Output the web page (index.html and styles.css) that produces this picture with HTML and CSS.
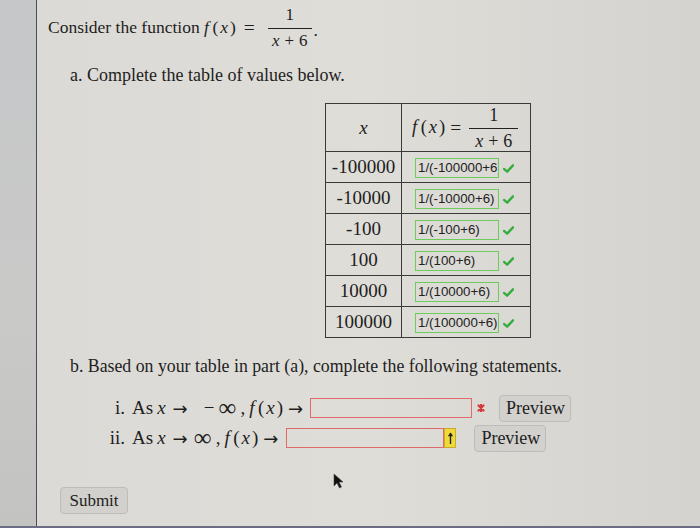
FILE: index.html
```html
<!DOCTYPE html>
<html>
<head>
<meta charset="utf-8">
<link rel="stylesheet" href="styles.css">
</head>
<body>
<div class="page">
  <div class="sidebar"></div>
  <div class="main">
    <div class="intro">
      <span class="t">Consider the function </span>
      <span class="fx"><i class="f">f</i>(<i class="x">x</i>)</span><span class="eq">=</span>
      <span class="frac"><span class="num">1</span><span class="den"><i>x</i><span class="plus">+</span>6</span></span><span class="dot">.</span>
    </div>
    <p class="parta">a. Complete the table of values below.</p>
    <div class="tablewrap">
      <table class="values">
        <tr class="head">
          <th class="c1"><i>x</i></th>
          <th class="c2"><div class="hf"><span class="fx"><i class="f">f</i>(<i class="x">x</i>)</span><span class="eq">=</span><span class="frac"><span class="num">1</span><span class="den"><i>x</i><span class="plus">+</span>6</span></span></div></th>
        </tr>
        <tr><td class="c1">-100000</td><td class="c2"><span class="ans">1/(-100000+6)</span><svg class="ok" viewBox="0 0 12 10" width="11" height="9"><path d="M1 5.5 L4.5 8.5 L11 1.5" fill="none" stroke="#35ad3c" stroke-width="2.6" stroke-linecap="round" stroke-linejoin="round"/></svg></td></tr>
        <tr><td class="c1">-10000</td><td class="c2"><span class="ans">1/(-10000+6)</span><svg class="ok" viewBox="0 0 12 10" width="11" height="9"><path d="M1 5.5 L4.5 8.5 L11 1.5" fill="none" stroke="#35ad3c" stroke-width="2.6" stroke-linecap="round" stroke-linejoin="round"/></svg></td></tr>
        <tr><td class="c1">-100</td><td class="c2"><span class="ans">1/(-100+6)</span><svg class="ok" viewBox="0 0 12 10" width="11" height="9"><path d="M1 5.5 L4.5 8.5 L11 1.5" fill="none" stroke="#35ad3c" stroke-width="2.6" stroke-linecap="round" stroke-linejoin="round"/></svg></td></tr>
        <tr><td class="c1">100</td><td class="c2"><span class="ans">1/(100+6)</span><svg class="ok" viewBox="0 0 12 10" width="11" height="9"><path d="M1 5.5 L4.5 8.5 L11 1.5" fill="none" stroke="#35ad3c" stroke-width="2.6" stroke-linecap="round" stroke-linejoin="round"/></svg></td></tr>
        <tr><td class="c1">10000</td><td class="c2"><span class="ans">1/(10000+6)</span><svg class="ok" viewBox="0 0 12 10" width="11" height="9"><path d="M1 5.5 L4.5 8.5 L11 1.5" fill="none" stroke="#35ad3c" stroke-width="2.6" stroke-linecap="round" stroke-linejoin="round"/></svg></td></tr>
        <tr><td class="c1">100000</td><td class="c2"><span class="ans">1/(100000+6)</span><svg class="ok" viewBox="0 0 12 10" width="11" height="9"><path d="M1 5.5 L4.5 8.5 L11 1.5" fill="none" stroke="#35ad3c" stroke-width="2.6" stroke-linecap="round" stroke-linejoin="round"/></svg></td></tr>
      </table>
    </div>
    <p class="partb">b. Based on your table in part (a), complete the following statements.</p>
    <div class="stmts">
      <div class="stmt s1">
        <span class="mark">i.</span>
        <span class="w">As</span><i class="v">x</i><span class="rel r1">→</span><span class="op">−</span><span class="inf">∞</span><span class="cm">,</span><span class="fx"><i class="f">f</i>(<i class="x">x</i>)</span><span class="rel r2">→</span>
        <span class="box box1"></span>
        <svg class="star" viewBox="0 0 8 8" width="8" height="8"><path d="M1.5 1.5 L6.5 6.5 M6.5 1.5 L1.5 6.5 M4 0.8 L4 7.2" stroke="#d43a3a" stroke-width="2.2" stroke-linecap="round"/></svg>
        <button class="btn prev">Preview</button>
      </div>
      <div class="stmt s2">
        <span class="mark">ii.</span>
        <span class="w">As</span><i class="v">x</i><span class="rel r1b">→</span><span class="inf">∞</span><span class="cm">,</span><span class="fx"><i class="f">f</i>(<i class="x">x</i>)</span><span class="rel r2b">→</span>
        <span class="box box2"></span>
        <span class="warn"><svg viewBox="0 0 9 14" width="9" height="14"><path d="M4.5 2 L4.5 13" stroke="#222" stroke-width="1.4"/><path d="M1.8 5.2 L4.5 1.5 L7.2 5.2 Z" fill="#222"/></svg></span>
        <button class="btn prev">Preview</button>
      </div>
    </div>
    <div class="submitrow">
      <button class="btn submit">Submit</button>
      <svg class="cursor" width="12" height="16" viewBox="0 0 12 16"><path d="M1 1 L1 13 L4 10 L6.5 15 L8.5 14 L6 9 L10 9 Z" fill="#111" stroke="#444" stroke-width="0.6"/></svg>
    </div>
  </div>
</div>
</body>
</html>
```
FILE: styles.css
```css
* { box-sizing: border-box; }
html, body { margin: 0; padding: 0; }
body {
  width: 700px;
  height: 528px;
  overflow: hidden;
  background: #dddbd6;
  font-family: "Liberation Serif", "Times New Roman", serif;
  color: #1e1e1e;
}
.page {
  display: flex;
  height: 528px;
  border-bottom: 2px solid #6c6c84;
}
.sidebar {
  width: 37px;
  flex: none;
  background: linear-gradient(180deg, #c6c7c9 0%, #c9c9c8 60%, #c3c3c2 100%);
  border-right: 1.5px solid #4d4d58;
}
.main {
  flex: 1;
  padding-left: 11px;
  background: linear-gradient(90deg, #dcdad6 0%, #dfddd8 50%, #d5d3cf 100%);
}
p { margin: 0; }

/* math pieces */
.fx { white-space: pre; }
.fx .f { padding-right: 3.5px; }
.fx .x { padding: 0 2px; }
.eq { margin: 0 13px 0 8px; font-size: 1.12em; }
.frac {
  display: inline-flex;
  flex-direction: column;
  align-items: center;
}
.num {
  display: block;
  padding: 0 2px 5px;
  border-bottom: 1px solid #222;
  width: 100%;
  text-align: center;
  line-height: 16px;
}
.den { display: block; padding: 4px 4px 0; line-height: 16px; white-space: pre; }
.plus { margin: 0 5px; }

.intro {
  font-size: 17.5px;
  padding-top: 4px;
  display: flex;
  align-items: center;
  height: 51px;
  white-space: pre;
}
.intro .frac { font-size: 17px; }
.dot { margin-top: 6px; margin-left: 2px; }
.parta {
  font-size: 18px;
  padding-left: 22px;
  margin-top: 14px;
}
.tablewrap {
  padding-left: 277px;
  margin-top: 17px;
}
.values {
  border-collapse: collapse;
  font-size: 19px;
}
.values th, .values td {
  border: 1.5px solid #3a3a3a;
  padding: 0;
  font-weight: normal;
}
.values .c1 { width: 76px; text-align: center; }
.values .c2 { width: 129px; text-align: left; padding-left: 13px; }
.head { height: 48px; }
.head .c2 { padding-left: 10px; }
.hf { display: flex; align-items: center; font-size: 18.5px; }
.hf .eq { margin: 0 8px 0 5px; font-size: 1.05em; }
.hf .frac { margin-top: 0; font-size: 18px; }
.hf .den { padding: 4px 6px 0; }
.values tr:not(.head) { height: 31px; }
.ans {
  display: inline-block;
  vertical-align: middle;
  width: 84px;
  height: 20px;
  border: 1.5px solid #6ccc5c;
  font-family: "Liberation Sans", Arial, sans-serif;
  font-size: 13.3px;
  line-height: 17px;
  padding-left: 2px;
  white-space: nowrap;
  overflow: hidden;
  color: #222;
}
.ok {
  vertical-align: middle;
  margin-left: 4px;
}
.partb {
  font-size: 17.8px;
  padding-left: 22px;
  margin-top: 18px;
}
.stmts {
  margin-top: 16px;
  font-size: 19px;
}
.stmt {
  display: flex;
  align-items: center;
  height: 30px;
  white-space: pre;
}
.mark {
  width: 84px;
  text-align: right;
  padding-right: 7px;
}
.v { margin-left: 4px; }
.rel {
  font-family: "DejaVu Sans", sans-serif;
  font-size: 18px;
}
.r1 { margin: 0 16px 0 7px; }
.op { margin-right: 4px; }
.inf {
  display: inline-block;
  width: 21px;
  text-align: left;
  font-size: 25px;
  line-height: 20px;
}
.cm { margin: 0 4px 0 1px; }
.r2 { margin: 0 7px 0 5px; }
.r1b { margin: 0 6px 0 7px; }
.r2b { margin: 0 8px 0 5px; }
.box {
  display: inline-block;
  height: 20px;
  border: 1.5px solid #e06a6a;
}
.box1 { width: 162px; }
.box2 { width: 158px; }
.star {
  margin-left: 5px;
  margin-right: 4px;
}
.warn {
  display: inline-flex;
  align-items: center;
  justify-content: center;
  width: 12px;
  height: 20px;
  background: #f0d93a;
  border: 1px solid #c4ae2c;
}
.btn {
  font-family: "Liberation Serif", "Times New Roman", serif;
  font-size: 18px;
  color: #222;
  background: #d2d1cd;
  border: 1px solid #bdbcb8;
  border-radius: 4px;
  height: 27px;
  padding: 0 6px;
}
.s1 .prev { margin-left: 10px; width: 72px; }
.s2 .prev { margin-left: 18px; width: 72px; }
.submitrow {
  position: relative;
  margin-top: 34px;
  padding-left: 12px;
}
.submit { width: 68px; height: 27px; font-size: 17px; }
.cursor {
  position: absolute;
  left: 285px;
  top: -14px;
}
```
